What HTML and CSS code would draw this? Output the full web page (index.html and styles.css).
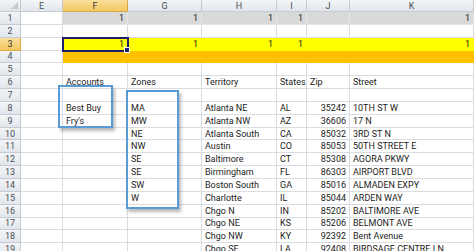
FILE: index.html
```html
<!DOCTYPE html>
<html lang="en">
<head>
<meta charset="UTF-8" />
<title>Sheet1</title>
<link rel="stylesheet" href="styles.css">
<script type="text/javascript">
const columns = ["E", "F", "G", "H", "I", "J", "K"];
const fills = {1: "gray", 3: "yellow", 4: "orange"};
const data = {
	1: {F: 1, G: 1, H: 1, I: 1, K: 1},
	3: {F: 1, G: 1, H: 1, I: 1, K: 1},
	6: {F: "Accounts", G: "Zones", H: "Territory", I: "States", J: "Zip", K: "Street"},
	8: {F: "Best Buy", G: "MA", H: "Atlanta NE", I: "AL", J: 35242, K: "10TH ST W"},
	9: {F: "Fry's", G: "MW", H: "Atlanta NW", I: "AZ", J: 36606, K: "17 N"},
	10: {G: "NE", H: "Atlanta South", I: "CA", J: 85032, K: "3RD ST N"},
	11: {G: "NW", H: "Austin", I: "CO", J: 85053, K: "50TH STREET E"},
	12: {G: "SE", H: "Baltimore", I: "CT", J: 85308, K: "AGORA PKWY"},
	13: {G: "SE", H: "Birmingham", I: "FL", J: 86303, K: "AIRPORT BLVD"},
	14: {G: "SW", H: "Boston South", I: "GA", J: 85016, K: "ALMADEN EXPY"},
	15: {G: "W", H: "Charlotte", I: "IL", J: 85044, K: "ARDEN WAY"},
	16: {H: "Chgo N", I: "IN", J: 85202, K: "BALTIMORE AVE"},
	17: {H: "Chgo NE", I: "KS", J: 85206, K: "BELMONT AVE"},
	18: {H: "Chgo NW", I: "KY", J: 92392, K: "Bent Avenue"},
	19: {H: "Chgo SE", I: "LA", J: 92408, K: "BIRDSAGE CENTRE LN"}
};
document.addEventListener("DOMContentLoaded", function(){
	const sheet = document.querySelector(".sheet");
	const add = (cls, text) => {
		const div = document.createElement("div");
		div.className = cls;
		if(text !== undefined) div.textContent = text;
		sheet.appendChild(div);
		return div;
	};
	add("hd corner");
	for(let col of columns){
		add(col == "F" ? "hd col on" : "hd col", col);
	}
	for(let r = 1; r <= 19; r++){
		add(r == 3 ? "hd row on" : "hd row", r);
		for(let col of columns){
			const value = (data[r] || {})[col];
			let cls = "cell";
			if(typeof value == "number") cls += " num";
			if(fills[r] && col != "E") cls += " " + fills[r];
			if(r == 3 && col == "F") cls += " active";
			add(cls, value);
		}
	}
});
</script>
</head>
<body>
<div class="wrap">
	<div class="sheet"></div>
	<div class="shape shape-accounts"></div>
	<div class="shape shape-zones"></div>
</div>
</body>
</html>
```

FILE: styles.css
```css
html, body{
	margin: 0;
}
body{
	background: #fff;
	overflow: hidden;
	font-family: Roboto, "Liberation Sans", sans-serif;
}
.wrap{
	position: relative;
	width: 474px;
	height: 251px;
	overflow: hidden;
}
.sheet{
	display: grid;
	grid-template-columns: 21px 42px 65px 74px 75px 30px 43px 124px;
	grid-template-rows: 12px;
	grid-auto-rows: 12.85px;
}
.hd{
	box-sizing: border-box;
	display: flex;
	align-items: center;
	justify-content: center;
	background: linear-gradient(#f3f5f8, #e2e6eb);
	border-right: 1px solid #c5cbd3;
	border-bottom: 1px solid #c5cbd3;
	font-size: 9px;
	color: #4b5058;
}
.hd.on{
	background: linear-gradient(#f9df9c, #f1c75f);
	border-color: #d9a84a;
	color: #3b3b3b;
}
.corner{
	position: relative;
}
.corner::after{
	content: "";
	position: absolute;
	right: 2px;
	bottom: 2px;
	border-left: 7px solid transparent;
	border-bottom: 7px solid #c3c9d1;
}
.cell{
	box-sizing: border-box;
	display: flex;
	align-items: center;
	padding: 0 2px 0 3px;
	border-right: 1px solid #dadcdf;
	border-bottom: 1px solid #dadcdf;
	font-size: 9px;
	color: #1c1c1c;
	white-space: nowrap;
}
.num{
	justify-content: flex-end;
	padding-right: 3px;
}
.gray{
	background: #d9d9d9;
	border-color: #e4e4e4;
}
.yellow{
	background: #ffff00;
	border-color: #ffff00;
}
.orange{
	background: #ffc000;
	border-color: #ffc000;
}
.active{
	position: relative;
	outline: 2px solid #1f1f6c;
	outline-offset: -1px;
}
.active::after{
	content: "";
	position: absolute;
	right: -3px;
	bottom: -3px;
	width: 4px;
	height: 4px;
	background: #1f1f6c;
	border: 1px solid #fff;
}
.shape{
	position: absolute;
	border: 2px solid #5b9bd5;
	box-shadow: 2px 3px 3px rgba(0, 0, 0, 0.28);
}
.shape-accounts{
	left: 58px;
	top: 85px;
	width: 51px;
	height: 39px;
}
.shape-zones{
	left: 126px;
	top: 90px;
	width: 49px;
	height: 115px;
}
```
